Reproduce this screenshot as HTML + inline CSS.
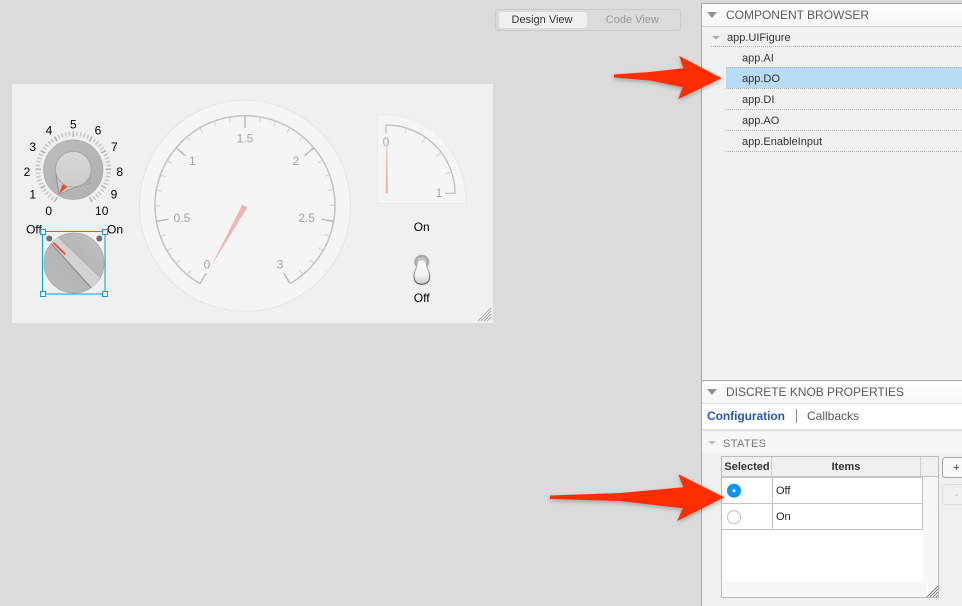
<!DOCTYPE html>
<html><head><meta charset="utf-8"><style>
html,body{margin:0;padding:0;background:#dbdbdb;overflow:hidden}
svg{display:block;font-family:"Liberation Sans",sans-serif}
</style></head><body>
<svg width="962" height="606" viewBox="0 0 962 606" xmlns="http://www.w3.org/2000/svg">
<defs>
<linearGradient id="hd" x1="0" y1="0" x2="0" y2="1"><stop offset="0" stop-color="#fff"/><stop offset="1" stop-color="#f6f6f6"/></linearGradient>
<linearGradient id="tg" x1="0" y1="0" x2="0" y2="1"><stop offset="0" stop-color="#fdfdfd"/><stop offset=".65" stop-color="#f2f2f2"/><stop offset="1" stop-color="#c8c8c8"/></linearGradient>
<linearGradient id="tgs" x1="0" y1="0" x2="0" y2="1"><stop offset="0" stop-color="#b0b0b0"/><stop offset=".45" stop-color="#a0a0a0"/><stop offset=".75" stop-color="#666"/><stop offset="1" stop-color="#444"/></linearGradient>
<linearGradient id="kn" x1="0" y1="0" x2="1" y2="1"><stop offset="0" stop-color="#bcbcbc"/><stop offset="1" stop-color="#b0b0b0"/></linearGradient>
<linearGradient id="dk" x1="1" y1="0" x2="0" y2="1"><stop offset="0" stop-color="#c2c2c2"/><stop offset=".5" stop-color="#b4b4b4"/><stop offset="1" stop-color="#bcbcbc"/></linearGradient>
<linearGradient id="in" x1="0" y1="0" x2="0" y2="1"><stop offset="0" stop-color="#d8d8d8"/><stop offset="1" stop-color="#cdcdcd"/></linearGradient>
<clipPath id="dc"><circle cx="74" cy="263" r="30"/></clipPath>
</defs>
<rect width="962" height="606" fill="#dbdbdb"/>

<!-- view toggle -->
<rect x="495.500" y="9.500" width="185" height="21" rx="3" fill="#dbdbdb" stroke="#cbcbcb"/>
<rect x="499" y="12" width="88" height="16" rx="3" fill="#f0f0f0"/>
<g font-size="11" text-anchor="middle">
<text x="542" y="23" fill="#333">Design View</text>
<text x="632.300" y="23" fill="#999">Code View</text>
</g>

<!-- figure panel -->
<rect x="12" y="84" width="481" height="239" fill="#f0f0f0"/>
<g stroke="#999" stroke-width=".8">
<path d="M478 321L491 308M481 321L491 311M484 321L491 314M487 321L491 317"/>
</g>

<!-- continuous knob -->
<path d="M55.550 200.040A35.500 35.500 0 1 1 91.050 200.040" fill="none" stroke="#c6c6c6" stroke-width="4.500" pathLength="50" stroke-dasharray=".4 .6" stroke-dashoffset=".2"/>
<g stroke="#b4b4b4" stroke-width="1.600">
<line x1="73.300" y1="131.500" x2="73.300" y2="137"/>
<line x1="73.300" y1="131.500" x2="73.300" y2="137" transform="rotate(-150 73.300 169.300)"/>
<line x1="73.300" y1="131.500" x2="73.300" y2="137" transform="rotate(150 73.300 169.300)"/>
<line x1="73.300" y1="131.500" x2="73.300" y2="137" transform="rotate(-120 73.300 169.300)"/>
<line x1="73.300" y1="131.500" x2="73.300" y2="137" transform="rotate(120 73.300 169.300)"/>
<line x1="73.300" y1="131.500" x2="73.300" y2="137" transform="rotate(-90 73.300 169.300)"/>
<line x1="73.300" y1="131.500" x2="73.300" y2="137" transform="rotate(90 73.300 169.300)"/>
<line x1="73.300" y1="131.500" x2="73.300" y2="137" transform="rotate(-60 73.300 169.300)"/>
<line x1="73.300" y1="131.500" x2="73.300" y2="137" transform="rotate(60 73.300 169.300)"/>
<line x1="73.300" y1="131.500" x2="73.300" y2="137" transform="rotate(-30 73.300 169.300)"/>
<line x1="73.300" y1="131.500" x2="73.300" y2="137" transform="rotate(30 73.300 169.300)"/>
</g>
<circle cx="73.300" cy="169.700" r="29.700" fill="url(#kn)" stroke="#a8a8a8" stroke-width=".7"/>
<polygon points="59,194 55.800,172 91,182 82,184" fill="#c8c8c8"/>
<path d="M59 194L55.800 174" stroke="#8a8a8a" stroke-width=".8" fill="none"/>
<path d="M59 194L84 184" stroke="#999" stroke-width=".8" fill="none"/>
<path d="M84 186L91 184V172L90 176Z" fill="#a8a8a8" opacity=".7"/>
<circle cx="73.300" cy="169.200" r="17.800" fill="url(#in)" stroke="#a0a0a0" stroke-width=".8"/>
<polygon points="59,194 62.700,184.300 67.300,186.700" fill="#ee4a38"/>
<g font-size="12" fill="#000" text-anchor="middle">
<text x="73.300" y="128.300">5</text><text x="49" y="134.300">4</text><text x="98" y="134.300">6</text>
<text x="32.700" y="151">3</text><text x="114.300" y="151">7</text>
<text x="27" y="176">2</text><text x="119.700" y="176">8</text>
<text x="32.700" y="198.300">1</text><text x="114" y="198.300">9</text>
<text x="48.700" y="215">0</text><text x="101.700" y="215">10</text>
<text x="34" y="233.600">Off</text><text x="115" y="233.600">On</text>
</g>

<!-- discrete knob -->
<circle cx="74" cy="263" r="30" fill="url(#dk)" stroke="#a8a8a8" stroke-width=".8"/>
<g clip-path="url(#dc)">
<polygon points="55,234 102,279 95,292 48,240" fill="#d2d2d2"/>
<line x1="48" y1="240" x2="95" y2="292" stroke="#858585" stroke-width="1"/>
<line x1="55" y1="234" x2="102" y2="279" stroke="#a8a8a8" stroke-width=".7"/>
</g>
<line x1="53.300" y1="242.700" x2="65.300" y2="254.300" stroke="#ee4a3a" stroke-width="1.800"/>
<circle cx="49.300" cy="238.500" r="3" fill="#6f6f6f"/>
<circle cx="99.300" cy="238.500" r="3" fill="#6f6f6f"/>
<rect x="42.500" y="231.500" width="62.500" height="62.500" fill="none" stroke="#0a98f5" stroke-width="1"/>
<g fill="#fff" stroke="#0a98f5" stroke-width="1">
<rect x="40.500" y="229.500" width="5" height="5"/><rect x="102.500" y="229.500" width="5" height="5"/>
<rect x="40.500" y="291.500" width="5" height="5"/><rect x="102.500" y="291.500" width="5" height="5"/>
</g>

<!-- circular gauge -->
<circle cx="245" cy="205.700" r="105.500" fill="#f5f5f5" stroke="#e5e5e5" stroke-width="1"/>
<path d="M200 283.640A90 90 0 1 1 290 283.640" fill="none" stroke="#c2c2c2" stroke-width="1.500"/>
<path d="M201.750 281A87 87 0 1 1 288.250 281" fill="none" stroke="#d2d2d2" stroke-width="5" pathLength="30" stroke-dasharray=".07 .93" stroke-dashoffset=".035"/>
<g stroke="#bcbcbc" stroke-width="1.500">
<line x1="245" y1="115.700" x2="245" y2="128" transform="rotate(-150 245 205.700)"/>
<line x1="245" y1="115.700" x2="245" y2="128" transform="rotate(-100 245 205.700)"/>
<line x1="245" y1="115.700" x2="245" y2="128" transform="rotate(-50 245 205.700)"/>
<line x1="245" y1="115.700" x2="245" y2="128"/>
<line x1="245" y1="115.700" x2="245" y2="128" transform="rotate(50 245 205.700)"/>
<line x1="245" y1="115.700" x2="245" y2="128" transform="rotate(100 245 205.700)"/>
<line x1="245" y1="115.700" x2="245" y2="128" transform="rotate(150 245 205.700)"/>
</g>
<g font-size="12" fill="#a4a4a4" text-anchor="middle">
<text x="245" y="142.500">1.5</text><text x="192.300" y="165">1</text><text x="296" y="165">2</text>
<text x="182" y="222">0.5</text><text x="306.700" y="222">2.5</text>
<text x="207" y="268.500">0</text><text x="280" y="268.500">3</text>
</g>
<polygon points="242.300,204.700 247.300,207.300 210,268.300" fill="#f1b3af"/>

<!-- 90 degree gauge -->
<path d="M377.500 114.500H386A80.700 88.800 0 0 1 466.500 203.500H377.500Z" fill="#f5f5f5" stroke="#e8e8e8"/>
<path d="M386 133V125A69 68.300 0 0 1 455 193.300H445" fill="none" stroke="#c2c2c2" stroke-width="1.400"/>
<g stroke="#d2d2d2" stroke-width="1">
<line x1="406" y1="128" x2="405" y2="133"/>
<line x1="425" y1="138" x2="422" y2="143"/>
<line x1="441" y1="152.500" x2="436.500" y2="156"/>
<line x1="450.500" y1="172" x2="445.500" y2="174"/>
</g>
<g font-size="12" fill="#a8a8a8" text-anchor="middle">
<text x="386" y="146">0</text><text x="439" y="197">1</text>
</g>
<polygon points="386.500,145 387.200,145 388,193.300 385.500,193.300" fill="#f1b3af"/>
<g font-size="12" fill="#000" text-anchor="middle">
<text x="421.700" y="231">On</text><text x="421.700" y="302">Off</text>
</g>
<!-- toggle -->
<ellipse cx="421.800" cy="262" rx="7.500" ry="7.300" fill="#ababab"/>
<ellipse cx="421.800" cy="262.500" rx="5.300" ry="5" fill="#cfcfcf"/>
<path d="M417.300 263C417.300 258.500 426.300 258.500 426.300 263C426.300 268 429.700 270 429.700 276.500C429.700 281.500 426.500 284.300 421.800 284.300C417 284.300 414 281.500 414 276.500C414 270 417.300 268 417.300 263Z" fill="url(#tg)" stroke="url(#tgs)" stroke-width="1"/>

<!-- right panel -->
<rect x="701" y="3" width="261" height="603" fill="#f0f0f0"/>
<rect x="702" y="4" width="260" height="22" fill="url(#hd)"/>
<line x1="702" y1="26.500" x2="962" y2="26.500" stroke="#d6d6d6"/>
<line x1="701" y1="3.500" x2="962" y2="3.500" stroke="#a8a8a8"/>
<line x1="701.500" y1="3" x2="701.500" y2="606" stroke="#a8a8a8"/>
<polygon points="707,12 717,12 712,18" fill="#909090"/>
<text x="726" y="19" font-size="12" fill="#5a5a5a" textLength="143">COMPONENT BROWSER</text>

<polygon points="712,36 720,36 716,39.500" fill="#aaa"/>
<g font-size="11" fill="#333">
<text x="727" y="41">app.UIFigure</text>
</g>
<rect x="726" y="67" width="236" height="21" fill="#b8dcf4"/>
<g font-size="11" fill="#333">
<text x="742" y="61.500">app.AI</text><text x="742" y="82">app.DO</text><text x="742" y="103">app.DI</text><text x="742" y="124">app.AO</text><text x="742" y="145">app.EnableInput</text>
</g>
<g stroke="#b0b0b0" stroke-dasharray="1 1" stroke-width="1">
<line x1="711" y1="46.500" x2="962" y2="46.500"/>
<line x1="726" y1="67.500" x2="962" y2="67.500"/>
<line x1="726" y1="88.500" x2="962" y2="88.500"/>
<line x1="726" y1="109.500" x2="962" y2="109.500"/>
<line x1="726" y1="130.500" x2="962" y2="130.500"/>
<line x1="726" y1="151.500" x2="962" y2="151.500"/>
</g>

<!-- properties -->
<line x1="702" y1="380.500" x2="962" y2="380.500" stroke="#a8a8a8"/>
<rect x="702" y="381" width="260" height="22" fill="url(#hd)"/>
<line x1="702" y1="403.500" x2="962" y2="403.500" stroke="#dcdcdc"/>
<polygon points="707,389 717,389 712,395" fill="#909090"/>
<text x="726" y="396" font-size="12" fill="#5a5a5a" textLength="178">DISCRETE KNOB PROPERTIES</text>
<rect x="702" y="404" width="260" height="25" fill="#fff"/>
<text x="707" y="420" font-size="12" font-weight="bold" fill="#2558b8" textLength="78">Configuration</text>
<line x1="796.500" y1="409" x2="796.500" y2="423" stroke="#888"/>
<text x="807" y="420" font-size="12" fill="#555">Callbacks</text>
<rect x="702" y="429" width="260" height="2" fill="#dedede"/>
<rect x="702" y="431" width="260" height="22" fill="#f7f7f7"/>
<polygon points="708,441 716,441 712,444.500" fill="#bbb"/>
<text x="723" y="447" font-size="11" fill="#777" textLength="43">STATES</text>

<!-- table -->
<rect x="721.500" y="456.500" width="217" height="141" fill="#f7f7f7" stroke="#bcbcbc"/>
<rect x="722" y="457" width="216" height="19" fill="#f0f0f0"/>
<line x1="722" y1="476.500" x2="938" y2="476.500" stroke="#c4c4c4"/>
<line x1="771.500" y1="457" x2="771.500" y2="476" stroke="#d0d0d0"/>
<line x1="920.500" y1="457" x2="920.500" y2="476" stroke="#d0d0d0"/>
<g font-size="11" font-weight="bold" fill="#333" text-anchor="middle">
<text x="747" y="470">Selected</text><text x="846" y="470">Items</text>
</g>
<rect x="722" y="477" width="201" height="105" fill="#fff"/>
<g fill="none" stroke="#c4c4c4" stroke-width="1">
<path d="M722 477.500H922.500V529.500H722M722 503.500H922.500M772.500 477V529.500"/>
</g>
<circle cx="734" cy="490.700" r="7" fill="#0a94f5"/><circle cx="734" cy="490.700" r="1.500" fill="#fff"/>
<circle cx="734" cy="517.300" r="6.500" fill="#fff" stroke="#bdbdbd"/>
<g font-size="11" fill="#222"><text x="776" y="494">Off</text><text x="776" y="520">On</text></g>
<rect x="927" y="585" width="11" height="12" fill="#fff"/>
<g stroke="#555" stroke-width=".8"><path d="M927 597L938 586M930 597L938 589M933 597L938 592M936 597L938 595"/></g>

<!-- buttons -->
<rect x="942.500" y="457.500" width="30" height="20" rx="3" fill="#f8f8f8" stroke="#a8a8a8"/>
<rect x="942.500" y="484.500" width="30" height="20" rx="3" fill="#f0f0f0" stroke="#ddd"/>
<text x="956.500" y="471" font-size="11" fill="#333" text-anchor="middle">+</text>
<text x="956.500" y="498" font-size="11" fill="#bbb" text-anchor="middle">-</text>

<!-- arrows -->
<g fill="#ff2d00" style="filter:drop-shadow(0 2px 2px rgba(0,0,0,.25))">
<polygon points="614,74.500 650,72 683.300,68.300 679.300,56 721.700,78.300 678.300,99 682.700,87.300 650,80.500 614,77.500"/>
<polygon points="550,495.500 620,493 683.300,487.300 678.300,474.300 724.300,497.300 677.300,521 682.700,508.300 620,501 550,499"/>
</g>
</svg>
</body></html>
